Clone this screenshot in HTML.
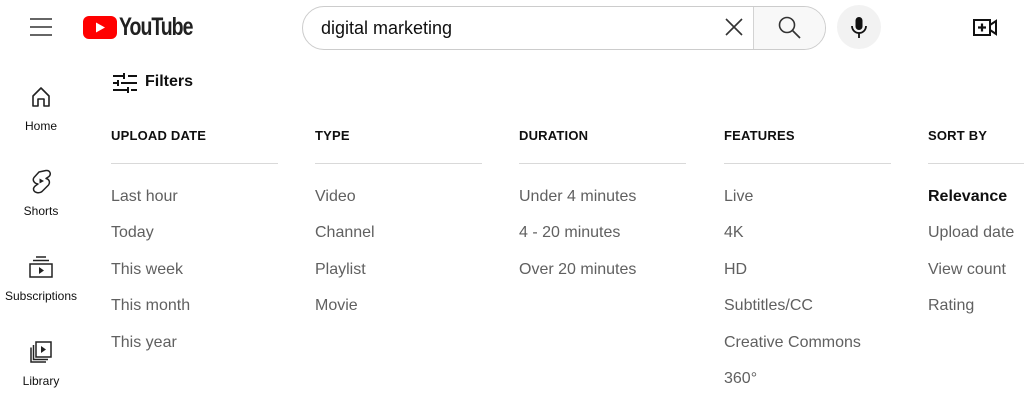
<!DOCTYPE html>
<html><head><style>
body{margin:0;width:1024px;height:401px;overflow:hidden;background:#fff;font-family:"Liberation Sans",Arial,sans-serif;position:relative}
.a{position:absolute}
.side{position:absolute;left:0;width:82px;text-align:center;font-size:12px;color:#0f0f0f}
.col{position:absolute;top:128px;width:167px}
.h{font-size:13px;font-weight:bold;color:#0f0f0f;height:35px;border-bottom:1px solid #d9d9d9;letter-spacing:.2px}
.it{font-size:16px;color:#606060;height:36.4px;line-height:36.4px}
.h + .it{margin-top:15px}
</style></head><body>
<svg class="a" style="left:30px;top:17px" width="22" height="20"><g stroke="#333" stroke-width="1.6"><line x1="0" y1="2" x2="22" y2="2"/><line x1="0" y1="10" x2="22" y2="10"/><line x1="0" y1="18" x2="22" y2="18"/></g></svg>
<svg class="a" style="left:83px;top:16px" width="34" height="23"><rect width="34" height="23" rx="6" fill="#f00"/><path d="M13 6.5 L22 11.5 L13 16.5Z" fill="#fff"/></svg>
<div class="a" style="left:119px;top:13px;font-size:25px;font-weight:bold;letter-spacing:-1.3px;color:#212121;transform:scaleX(.78);transform-origin:left">YouTube</div>
<div class="a" style="left:302px;top:6px;width:522px;height:42px;border:1px solid #ccc;border-radius:23px;overflow:hidden">
<div class="a" style="left:18px;top:11px;font-size:18px;color:#0f0f0f">digital marketing</div>
<div class="a" style="left:450px;top:0;width:72px;height:42px;background:#f8f8f8;border-left:1px solid #d3d3d3"></div>
</div>
<svg class="a" style="left:725px;top:18px" width="18" height="18"><path d="M1 1L17 17M17 1L1 17" stroke="#333" stroke-width="1.6"/></svg>
<svg class="a" style="left:778px;top:16px" width="24" height="24"><circle cx="9" cy="9" r="7.5" fill="none" stroke="#333" stroke-width="1.6"/><line x1="14.5" y1="14.5" x2="22" y2="22" stroke="#333" stroke-width="1.7"/></svg>
<div class="a" style="left:837px;top:5px;width:44px;height:44px;border-radius:50%;background:#f2f2f2"></div>
<svg class="a" style="left:849px;top:16px" width="20" height="24"><rect x="6.5" y="1" width="7" height="13" rx="3.5" fill="#111"/><path d="M3 10a7 7 0 0 0 14 0" fill="none" stroke="#111" stroke-width="1.8"/><line x1="10" y1="17" x2="10" y2="22" stroke="#111" stroke-width="1.8"/></svg>
<svg class="a" style="left:973px;top:18px" width="26" height="20"><rect x="1" y="2" width="16" height="15" fill="none" stroke="#111" stroke-width="2"/><path d="M17 7L23 3V16L17 12" fill="none" stroke="#111" stroke-width="2"/><path d="M9 5.5V13.5M5 9.5H13" stroke="#111" stroke-width="2.2"/></svg>
<svg class="a" style="left:113px;top:73px" width="24" height="20"><g stroke="#111" stroke-width="2"><line x1="0" y1="3" x2="11" y2="3"/><line x1="15" y1="3" x2="24" y2="3"/><line x1="11" y1="0" x2="11" y2="6"/><line x1="0" y1="10" x2="4" y2="10"/><line x1="8" y1="10" x2="24" y2="10"/><line x1="5" y1="7" x2="5" y2="13"/><line x1="0" y1="17" x2="14" y2="17"/><line x1="18" y1="17" x2="24" y2="17"/><line x1="15" y1="14" x2="15" y2="20"/></g></svg>
<div class="a" style="left:145px;top:73px;font-size:16px;font-weight:bold;color:#0f0f0f">Filters</div>
<svg class="a" style="left:31px;top:86px" width="20" height="22"><path d="M2 10L10 2L18 10V20H13V13H7V20H2Z" fill="none" stroke="#222" stroke-width="1.6" stroke-linejoin="round"/></svg>
<div class="side" style="top:119px">Home</div>
<svg class="a" style="left:29px;top:169px" width="24" height="26"><path d="M10 3 L17 1.5 C21 1 22.5 5 20 7.5 L17 9.5 C20 10 21.5 13 19.5 16 L13 22.5 C10 25 4.5 23.5 4.5 20 C4.5 18 6 17 7.5 16 L9 15 C5.5 14.5 3 11.5 5 8.5Z" fill="none" stroke="#222" stroke-width="1.5" stroke-linejoin="round"/><path d="M10.5 9.5L15 12L10.5 14.5Z" fill="#222"/></svg>
<div class="side" style="top:204px">Shorts</div>
<svg class="a" style="left:29px;top:256px" width="24" height="22"><g fill="none" stroke="#222" stroke-width="1.5"><line x1="7" y1="1" x2="17" y2="1"/><line x1="4" y1="4.5" x2="20" y2="4.5"/><rect x="1" y="8" width="22" height="13"/></g><path d="M10 11L15 14.5L10 18Z" fill="#222"/></svg>
<div class="side" style="top:289px">Subscriptions</div>
<svg class="a" style="left:30px;top:341px" width="22" height="22"><g fill="none" stroke="#222" stroke-width="1.5"><rect x="6" y="1" width="15" height="15"/><path d="M3.5 4V18.5H18"/><path d="M1 6.5V21H16"/></g><path d="M11 5L16 8.5L11 12Z" fill="#222"/></svg>
<div class="side" style="top:374px">Library</div>
<div class="col" style="left:111px"><div class="h">UPLOAD DATE</div><div class="it">Last hour</div><div class="it">Today</div><div class="it">This week</div><div class="it">This month</div><div class="it">This year</div></div>
<div class="col" style="left:315px"><div class="h">TYPE</div><div class="it">Video</div><div class="it">Channel</div><div class="it">Playlist</div><div class="it">Movie</div></div>
<div class="col" style="left:519px"><div class="h">DURATION</div><div class="it">Under 4 minutes</div><div class="it">4 - 20 minutes</div><div class="it">Over 20 minutes</div></div>
<div class="col" style="left:724px"><div class="h">FEATURES</div><div class="it">Live</div><div class="it">4K</div><div class="it">HD</div><div class="it">Subtitles/CC</div><div class="it">Creative Commons</div><div class="it">360°</div></div>
<div class="col" style="left:928px"><div class="h">SORT BY</div><div class="it" style="color:#0f0f0f;font-weight:bold">Relevance</div><div class="it">Upload date</div><div class="it">View count</div><div class="it">Rating</div></div>
</body></html>
